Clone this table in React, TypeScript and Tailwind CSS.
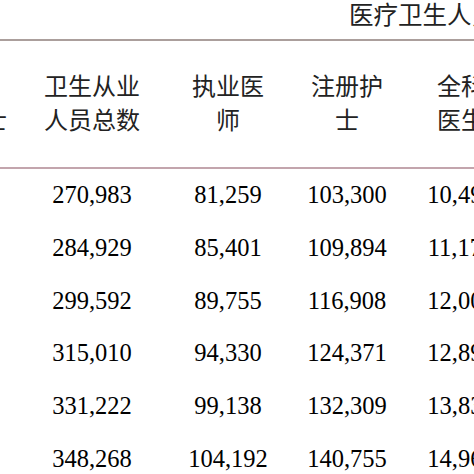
const FONT = { fontFamily: '"Liberation Serif", "Noto Sans CJK SC", serif' };

const headers: [string, string][] = [
  ["卫生从业", "人员总数"],
  ["执业医", "师"],
  ["注册护", "士"],
  ["全科", "医生"],
];

const rows: string[][] = [
  ["270,983", "81,259", "103,300", "10,495"],
  ["284,929", "85,401", "109,894", "11,171"],
  ["299,592", "89,755", "116,908", "12,006"],
  ["315,010", "94,330", "124,371", "12,895"],
  ["331,222", "99,138", "132,309", "13,832"],
  ["348,268", "104,192", "140,755", "14,960"],
];

// column widths, leftmost column is cut off by the frame
const colClass = [
  "w-[136px] shrink-0 flex flex-col items-center",
  "w-[136px] shrink-0 flex flex-col items-center",
  "w-[102px] shrink-0 flex flex-col items-center",
  "w-[126px] shrink-0 flex flex-col items-center",
];

export default function App() {
  return (
    <div
      className="w-[474px] h-[474px] overflow-hidden bg-white text-[#111]"
      style={FONT}
    >
      {/* table caption */}
      <div className="h-[39px] flex items-center pb-[6px] pl-[349px] whitespace-nowrap text-[24.5px] text-[#222]">
        医疗卫生人员数（人）
      </div>
      <div className="h-[2px] w-full bg-[#ab9f9c]" />

      {/* header */}
      <div className="h-[126px] flex items-center whitespace-nowrap text-[24px] leading-[34px] text-[#222]">
        <div className="w-[24px] shrink-0 flex flex-col items-end pr-[17px]">
          <span>&nbsp;</span>
          <span>士</span>
        </div>
        {headers.map(([a, b], i) => (
          <div key={i} className={colClass[i]}>
            <span>{a}</span>
            <span>{b}</span>
          </div>
        ))}
      </div>
      <div className="h-[2px] w-full bg-[#c3a5ad]" />

      {/* body */}
      <div className="whitespace-nowrap text-[24.5px] text-black">
        {rows.map((r, ri) => (
          <div key={ri} className="h-[52.8px] flex items-center">
            <div className="w-[24px] shrink-0" />
            {r.map((v, ci) => (
              <div key={ci} className={colClass[ci]}>
                {v}
              </div>
            ))}
          </div>
        ))}
      </div>
    </div>
  );
}
